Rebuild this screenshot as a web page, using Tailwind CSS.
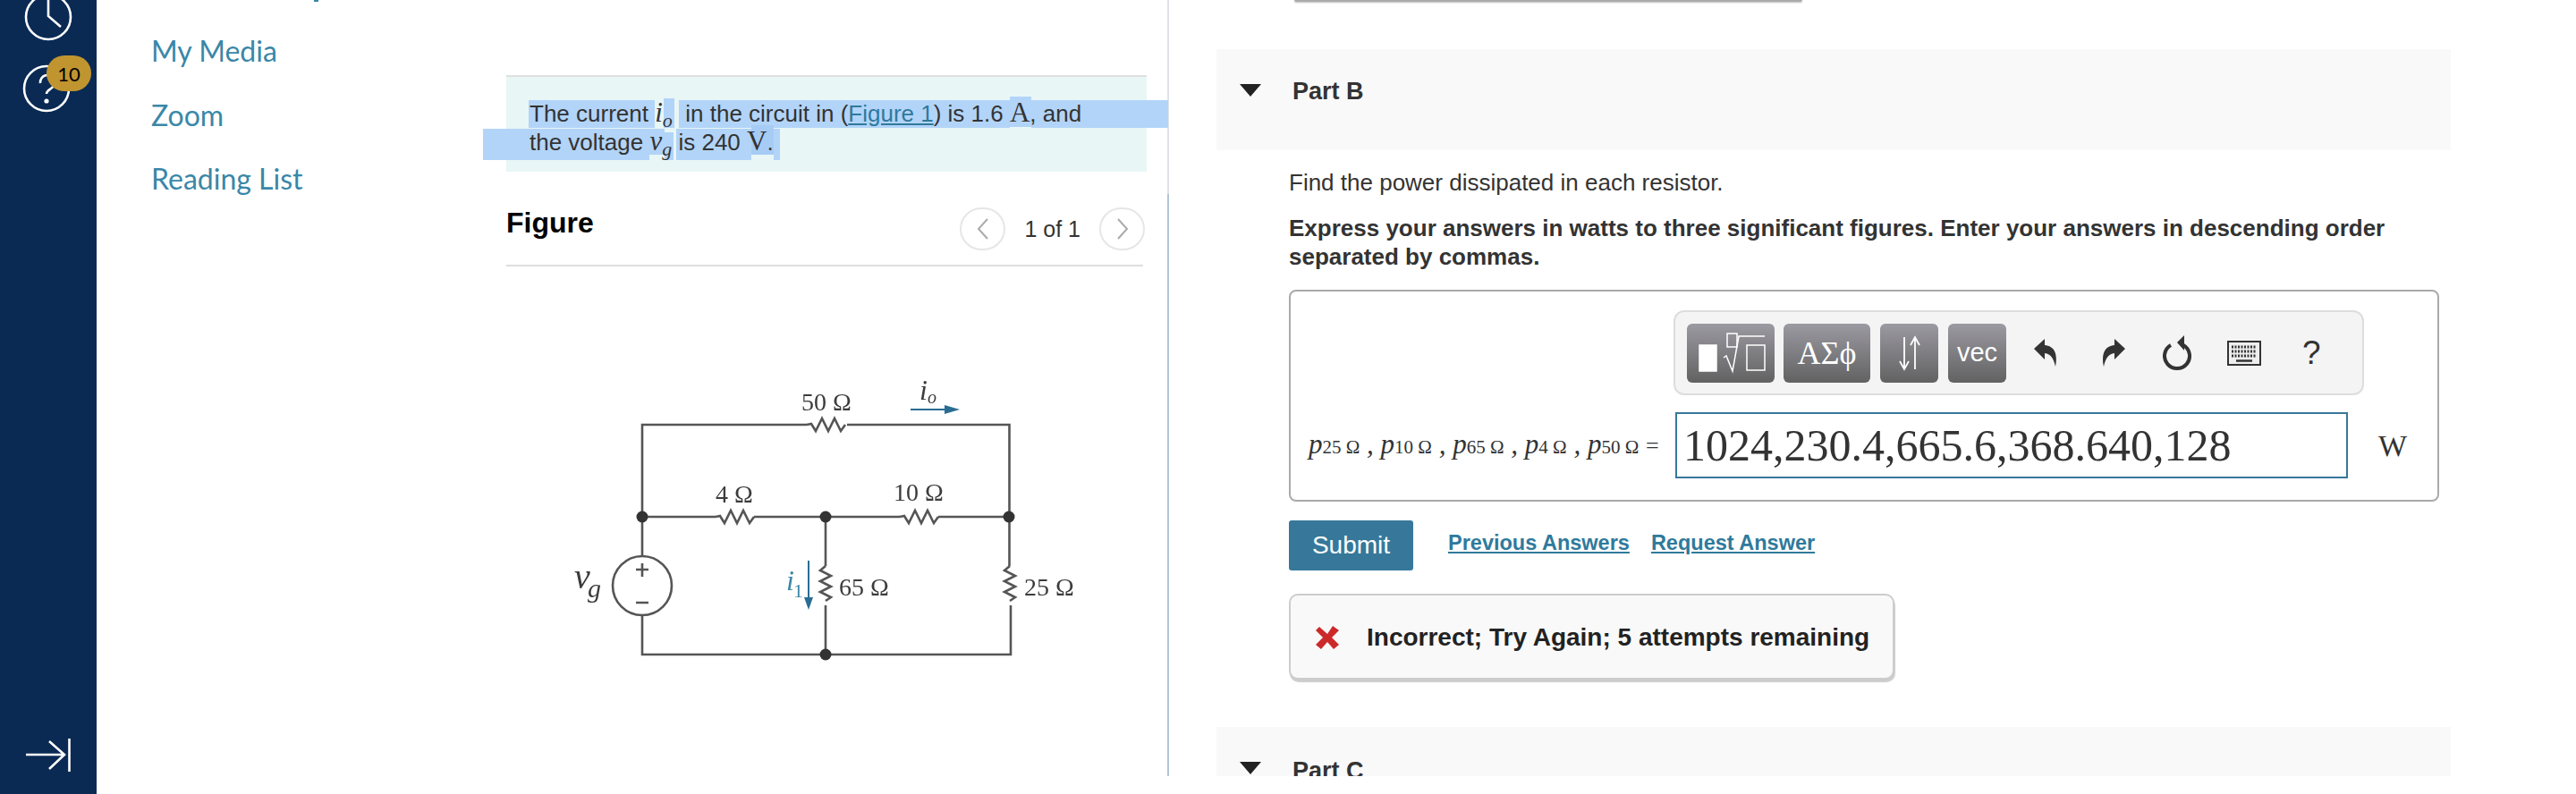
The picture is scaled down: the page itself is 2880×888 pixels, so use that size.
<!DOCTYPE html>
<html><head><meta charset="utf-8"><title>Part B</title>
<script src="https://cdn.jsdelivr.net/npm/@tailwindcss/browser@4"></script></head>
<body class="m-0 bg-white">
<div class="flex h-[888px] w-[2880px] overflow-hidden bg-white font-['Liberation_Sans',Arial,sans-serif] text-[#333]">
  <!-- global nav -->
  <aside class="relative w-[108px] shrink-0 bg-[#0a2a54]">
    <svg class="absolute left-[24px] top-[-10px]" width="60" height="60" viewBox="0 0 60 60" fill="none" stroke="#fff" stroke-width="2.6"><circle cx="30" cy="29" r="25"/><path d="M23 5V28L37 40" transform="translate(7 0)"/></svg>
    <svg class="absolute left-[24px] top-[71px]" width="56" height="56" viewBox="0 0 56 56" fill="none" stroke="#fff" stroke-width="2.6"><circle cx="28" cy="28" r="25"/><path d="M21 22a8 8 0 1 1 12 6c-3 2-5 3-5 6"/><circle cx="28" cy="42" r="2.6" fill="#fff" stroke="none"/></svg>
    <div class="absolute left-[52px] top-[62px] flex h-[40px] w-[50px] items-center justify-center rounded-[20px] bg-[#c0952f] font-['Lato',sans-serif] text-[22px] text-black">10</div>
    <svg class="absolute left-[26px] top-[824px]" width="56" height="40" viewBox="26 824 56 40" fill="none" stroke="#fff" stroke-width="2.6"><path d="M29 844H72M55 829L72 844L55 860"/><path d="M77.5 826V863"/></svg>
  </aside>
  <!-- course nav -->
  <nav class="relative w-[418px] shrink-0 pl-[61px] pt-[34px] font-['Lato',sans-serif] text-[32px] leading-[46px] text-[#3a87a8]">
    <div class="absolute left-[243px] top-0 h-[2px] w-[5px] bg-[#3a87a8]"></div>
    <div class="mb-[25.5px]">My Media</div>
    <div class="mb-[25.5px]">Zoom</div>
    <div>Reading List</div>
  </nav>
  <div class="flex h-[868px] flex-1 overflow-hidden pl-[40px]">
    <!-- left panel -->
    <section class="relative w-[741px] shrink-0 pr-[25px] pt-[84px]">
      <div class="absolute right-0 top-0 h-[217px] w-[2px] bg-[#dfe3e8]"></div>
      <div class="absolute bottom-0 right-0 top-[217px] w-[2px] bg-[#b4c6d8]"></div>
      <div class="relative h-[108px] border-t-2 border-[#e0e0e0] bg-[#e8f6f6] pl-[26px] pt-[24px] text-[26px] leading-[33px]">
        <div class="absolute left-[25px] top-[26px] h-[31px] w-[141px] bg-[#b2d4f8]"></div>
        <div class="absolute left-[176px] top-[24px] h-[33px] w-[12px] bg-[#b2d4f8]"></div>
        <div class="absolute left-[193px] top-[26px] h-[31px] w-[370px] bg-[#b2d4f8]"></div>
        <div class="absolute left-[563px] top-[22px] h-[34px] w-[24px] bg-[#b2d4f8]"></div>
        <div class="absolute left-[587px] top-[26px] h-[31px] w-[153px] bg-[#b2d4f8]"></div>
        <div class="absolute left-[-26px] top-[58px] h-[35px] w-[186px] bg-[#b2d4f8]"></div>
        <div class="absolute left-[160px] top-[58px] h-[29px] w-[17px] bg-[#b2d4f8]"></div>
        <div class="absolute left-[177px] top-[62px] h-[31px] w-[10px] bg-[#b2d4f8]"></div>
        <div class="absolute left-[190px] top-[58px] h-[35px] w-[84px] bg-[#b2d4f8]"></div>
        <div class="absolute left-[274px] top-[54px] h-[33px] w-[25px] bg-[#a6ccf6]"></div>
        <div class="absolute left-[299px] top-[58px] h-[35px] w-[7px] bg-[#b2d4f8]"></div>
        <p class="relative h-[32px] whitespace-nowrap">The current <span class="font-['Liberation_Serif',serif] text-[31px] italic leading-none">i<sub class="text-[22px] leading-none">o</sub></span> &nbsp;in the circuit in (<a class="text-[#2f7a9c] underline">Figure 1</a>) is 1.6 <span class="font-['Liberation_Serif',serif] text-[31px] leading-none">A</span>, and</p>
        <p class="relative whitespace-nowrap">the voltage <span class="font-['Liberation_Serif',serif] text-[31px] italic leading-none">v<sub class="text-[22px] leading-none">g</sub></span> is 240 <span class="font-['Liberation_Serif',serif] text-[31px] leading-none">V</span>.</p>
      </div>
      <div class="mt-[40px] flex h-[48px] items-center justify-between pr-[2px]">
        <h2 class="mb-[14px] text-[32px] font-bold leading-[36px] text-black">Figure</h2>
        <div class="flex items-center">
          <span class="flex h-[48px] w-[51px] items-center justify-center rounded-full border-2 border-[#e6e6e6]"><svg width="16" height="26" viewBox="0 0 16 26" fill="none" stroke="#aaa" stroke-width="2"><path d="M13 2L3 13L13 24"/></svg></span>
          <span class="mx-[21px] mt-[2px] text-[25px]">1 of 1</span>
          <span class="flex h-[48px] w-[51px] items-center justify-center rounded-full border-2 border-[#e6e6e6]"><svg width="16" height="26" viewBox="0 0 16 26" fill="none" stroke="#aaa" stroke-width="2"><path d="M3 2L13 13L3 24"/></svg></span>
        </div>
      </div>
      <div class="mt-[16px] h-[2px] w-[712px] bg-[#dedede]"></div>
      <svg class="ml-[34px] mt-[102px] block blur-[0.7px]" width="640" height="360" viewBox="600 400 640 360" fill="none">
        <g stroke="#555" stroke-width="2.6">
          <path d="M902 475H718V622M718 688V732H1130V677M1128.500 633V475H947"/>
          <path d="M902 475l5-1 5 8 7-14 7 14 7-14 7 14 5-7"/>
          <path d="M718 578H800M843 578H1006M1049 578H1128"/>
          <path d="M800 578l5-1 5 8 7-14 7 14 7-14 7 14 5-7"/>
          <path d="M1006 578l5-1 5 8 7-14 7 14 7-14 7 14 5-7"/>
          <path d="M923 578V633M923 677V732"/>
          <path d="M923 633l-6 5 12 6-12 6 12 6-12 6 12 6-6 4" />
          <path d="M1129 633l-6 5 12 6-12 6 12 6-12 6 12 6-6 4" />
          <circle cx="718" cy="655" r="33"/>
          <path d="M718 630V645M711 637H725M711 674H725"/>
        </g>
        <g fill="#333"><circle cx="718" cy="578" r="6.500"/><circle cx="923" cy="578" r="6.500"/><circle cx="1128" cy="578" r="6.500"/><circle cx="923" cy="732" r="6.500"/></g>
        <g stroke="#2a6d94" stroke-width="2" fill="#2a6d94"><path d="M1018 458H1060"/><path d="M1056 453L1073 458L1056 463Z" stroke="none"/><path d="M904 627V670"/><path d="M899 668L904 682L909 668Z" stroke="none"/></g>
        <g font-family="Liberation Serif, serif" font-size="28" fill="#3c3c3c">
          <text x="896" y="459">50 Ω</text><text x="800" y="562">4 Ω</text><text x="999" y="560">10 Ω</text><text x="938" y="666">65 Ω</text><text x="1145" y="666">25 Ω</text>
          <text x="1028" y="447" font-style="italic" font-size="32">i</text><text x="1037" y="451" font-style="italic" font-size="20">o</text>
          <text x="642" y="658" font-style="italic" font-size="40">v</text><text x="657" y="668" font-style="italic" font-size="30">g</text>
          <text x="879" y="660" font-style="italic" font-size="32" fill="#3a87a8">i</text><text x="887" y="668" font-size="22" fill="#3a87a8">1</text>
        </g>
      </svg>
    </section>
    <!-- right panel -->
    <section class="relative ml-[53px] w-[1380px] shrink-0">
      <div class="absolute left-[87px] top-0 h-[2px] w-[568px] rounded-b-[4px] bg-[#aaa] shadow-[0_1px_2px_#bbb]"></div>
      <div class="mt-[55px] flex h-[113px] items-start gap-[35px] bg-[#f9f9f9] pl-[26px] pt-[31px]">
        <svg class="mt-[8px]" width="24" height="14" viewBox="0 0 24 14"><path d="M0 0H24L12 14Z" fill="#222"/></svg>
        <h3 class="text-[27px] font-bold leading-[32px]">Part B</h3>
      </div>
      <div class="ml-[81px] w-[1286px]">
        <p class="mt-[20px] text-[26px] leading-[32px]">Find the power dissipated in each resistor.</p>
        <p class="mt-[19px] text-[26px] font-bold leading-[32px]">Express your answers in watts to three significant figures. Enter your answers in descending order separated by commas.</p>
        <div class="mt-[21px] h-[237px] rounded-[8px] border-2 border-[#aaa] px-[20px] pt-[21px]">
          <div class="ml-[408px] flex h-[95px] w-[772px] items-center rounded-[12px] border-2 border-[#ddd] bg-[#f4f4f4] pl-[13px]">
            <div class="h-[66px] w-[98px] rounded-[6px] bg-linear-to-b from-[#9c9aa2] to-[#626262]">
              <svg width="98" height="66" viewBox="0 0 98 66" fill="none" stroke="#fff" stroke-width="1.500"><rect x="14" y="24" width="19" height="29" fill="#fff"/><rect x="45" y="11" width="11" height="15"/><path d="M41 38l3-2 7 17 7-39h29"/><rect x="67" y="24" width="20" height="28"/></svg>
            </div>
            <div class="ml-[10px] flex h-[66px] w-[97px] items-center justify-center rounded-[6px] bg-linear-to-b from-[#9c9aa2] to-[#626262] font-['Liberation_Serif',serif] text-[36px] text-white">ΑΣϕ</div>
            <div class="ml-[11px] flex h-[66px] w-[65px] items-center justify-center rounded-[6px] bg-linear-to-b from-[#9c9aa2] to-[#626262]">
              <svg width="30" height="40" viewBox="0 0 30 40" fill="none" stroke="#fff" stroke-width="1.800"><path d="M9 2V36M4 29L9 38L14 29M21 38V4M16 11L21 2L26 11"/></svg>
            </div>
            <div class="ml-[11px] flex h-[66px] w-[65px] items-center justify-center rounded-[6px] bg-linear-to-b from-[#9c9aa2] to-[#626262] text-[29px] text-white">vec</div>
            <svg class="ml-[30px]" width="28" height="32" viewBox="0 0 28 32" fill="#333"><path d="M1 11L13 0V7C23 8 28 15 25 31C23 22 20 17 13 16V23Z"/></svg>
            <svg class="ml-[48px]" width="28" height="32" viewBox="0 0 28 32" fill="#333"><path d="M27 11L15 0V7C5 8 0 15 3 31C5 22 8 17 15 16V23Z"/></svg>
            <svg class="ml-[41px]" width="34" height="40" viewBox="0 0 34 40" fill="none" stroke="#333" stroke-width="4"><path d="M9 11A14 14 0 1 0 23 11"/><path d="M24 0L16 8L24 17Z" fill="#333" stroke="none"/></svg>
            <svg class="ml-[38px]" width="38" height="28" viewBox="0 0 38 28" fill="none" stroke="#333"><rect x="1" y="1" width="36" height="26" fill="#eee" stroke-width="2"/><path d="M5 7H33M5 12H33M5 17H33" stroke-width="3" stroke-dasharray="2 1.500"/><path d="M10 22.500H28" stroke-width="2.500"/></svg>
            <span class="ml-[46px] font-['Liberation_Sans',sans-serif] text-[37px] text-[#333]">?</span>
          </div>
          <div class="mt-[19px] flex items-center">
            <div class="w-[410px] whitespace-nowrap font-['Liberation_Serif',serif] text-[31px] italic leading-[40px] text-[#333]"><span>p</span><span class="text-[21px] not-italic">25 Ω</span> , <span>p</span><span class="text-[21px] not-italic">10 Ω</span> , <span>p</span><span class="text-[21px] not-italic">65 Ω</span> , <span>p</span><span class="text-[21px] not-italic">4 Ω</span> , <span>p</span><span class="text-[21px] not-italic">50 Ω</span> <span class="not-italic text-[26px]">=</span></div>
            <div class="flex h-[74px] w-[752px] items-center border-2 border-[#37789a] pl-[7px] font-['Liberation_Serif',serif] text-[50px] text-[#333]">1024,230.4,665.6,368.640,128</div>
            <span class="ml-[34px] font-['Liberation_Serif',serif] text-[34px]">W</span>
          </div>
        </div>
        <div class="mt-[21px] flex items-start">
          <button class="h-[56px] w-[139px] rounded-[3px] bg-[#37789a] text-[28px] text-white">Submit</button>
          <a class="ml-[39px] mt-[9px] text-[23.5px] font-bold leading-[32px] text-[#2f7a9c] underline">Previous Answers</a>
          <a class="ml-[24px] mt-[9px] text-[23.5px] font-bold leading-[32px] text-[#2f7a9c] underline">Request Answer</a>
        </div>
        <div class="mt-[26px] flex h-[96px] w-[677px] items-center rounded-[10px] border-2 border-[#ccc] bg-[#f9f9f9] pl-[27px] pt-[2px] shadow-[1px_3px_1px_#ccc]">
          <svg width="28" height="28" viewBox="0 0 28 28"><path d="M5 2L14 10L20 1L27 6L19 14L27 22L21 27L14 19L7 27L1 22L9 14L1 6Z" fill="#cc2a2a"/></svg>
          <span class="ml-[30px] whitespace-nowrap text-[28px] font-bold text-[#222]">Incorrect; Try Again; 5 attempts remaining</span>
        </div>
      </div>
      <div class="mt-[53px] flex h-[100px] items-start gap-[35px] bg-[#f9f9f9] pl-[26px] pt-[33px]">
        <svg class="mt-[6px]" width="24" height="14" viewBox="0 0 24 14"><path d="M0 0H24L12 14Z" fill="#222"/></svg>
        <h3 class="text-[27px] font-bold leading-[32px]">Part C</h3>
      </div>
    </section>
  </div>
</div>
</body></html>
